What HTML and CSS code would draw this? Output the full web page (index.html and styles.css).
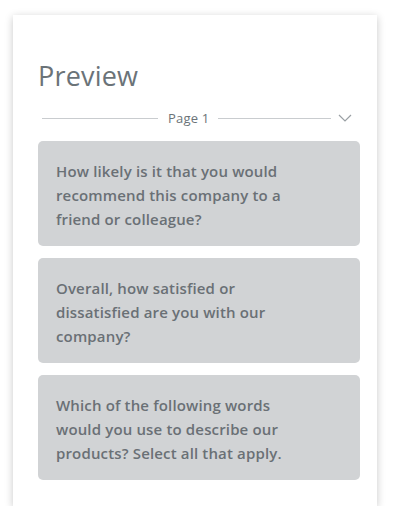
FILE: index.html
```html
<!DOCTYPE html>
<html>
<head>
<meta charset="utf-8">
<link rel="stylesheet" href="styles.css">
</head>
<body>
<div class="card">
  <h1 class="title">Preview</h1>
  <div class="page-row">
    <span class="line"></span>
    <span class="page-label">Page 1</span>
    <span class="line line-right"></span>
    <svg class="chev" width="14" height="8" viewBox="0 0 14 8"><path d="M1 1 L7 7 L13 1" fill="none" stroke="#9aa0a4" stroke-width="1.2"/></svg>
  </div>
  <div class="questions">
    <div class="q">How likely is it that you would recommend this company to a friend or colleague?</div>
    <div class="q">Overall, how satisfied or dissatisfied are you with our company?</div>
    <div class="q">Which of the following words would you use to describe our products? Select all that apply.</div>
  </div>
</div>
</body>
</html>
```
FILE: styles.css
```css
html, body { margin: 0; padding: 0; background: #ffffff; }
body { font-family: "Open Sans", "Liberation Sans", sans-serif; }
.card {
  margin: 15px 0 0 13px;
  width: 364px;
  height: 491px;
  box-sizing: border-box;
  background: #fff;
  box-shadow: 0 2px 8px rgba(0,0,0,0.22);
  padding: 41px 17px 0 25px;
}
.title {
  margin: 0;
  font-weight: 400;
  font-size: 27px;
  line-height: 40px;
  color: #6b7378;
  letter-spacing: 0.2px;
}
.page-row {
  display: flex;
  align-items: center;
  height: 20px;
  margin-top: 12px;
  padding-left: 4px;
}
.line { height: 1px; background: #c9cccf; width: 116px; }
.line-right { width: 113px; }
.page-label {
  font-size: 13px;
  color: #6b7378;
  margin: 0 9px 0 10px;
  letter-spacing: 0.2px;
}
.chev { margin-left: 7px; }
.questions {
  display: flex;
  flex-direction: column;
  gap: 12px;
  margin-top: 13px;
}
.q {
  height: 105px;
  box-sizing: border-box;
  background: #d1d3d5;
  border-radius: 5px;
  padding: 18px 70px 0 18px;
  font-size: 15px;
  font-weight: 600;
  line-height: 24px;
  letter-spacing: 0.15px;
  color: #6a7075;
}
```
